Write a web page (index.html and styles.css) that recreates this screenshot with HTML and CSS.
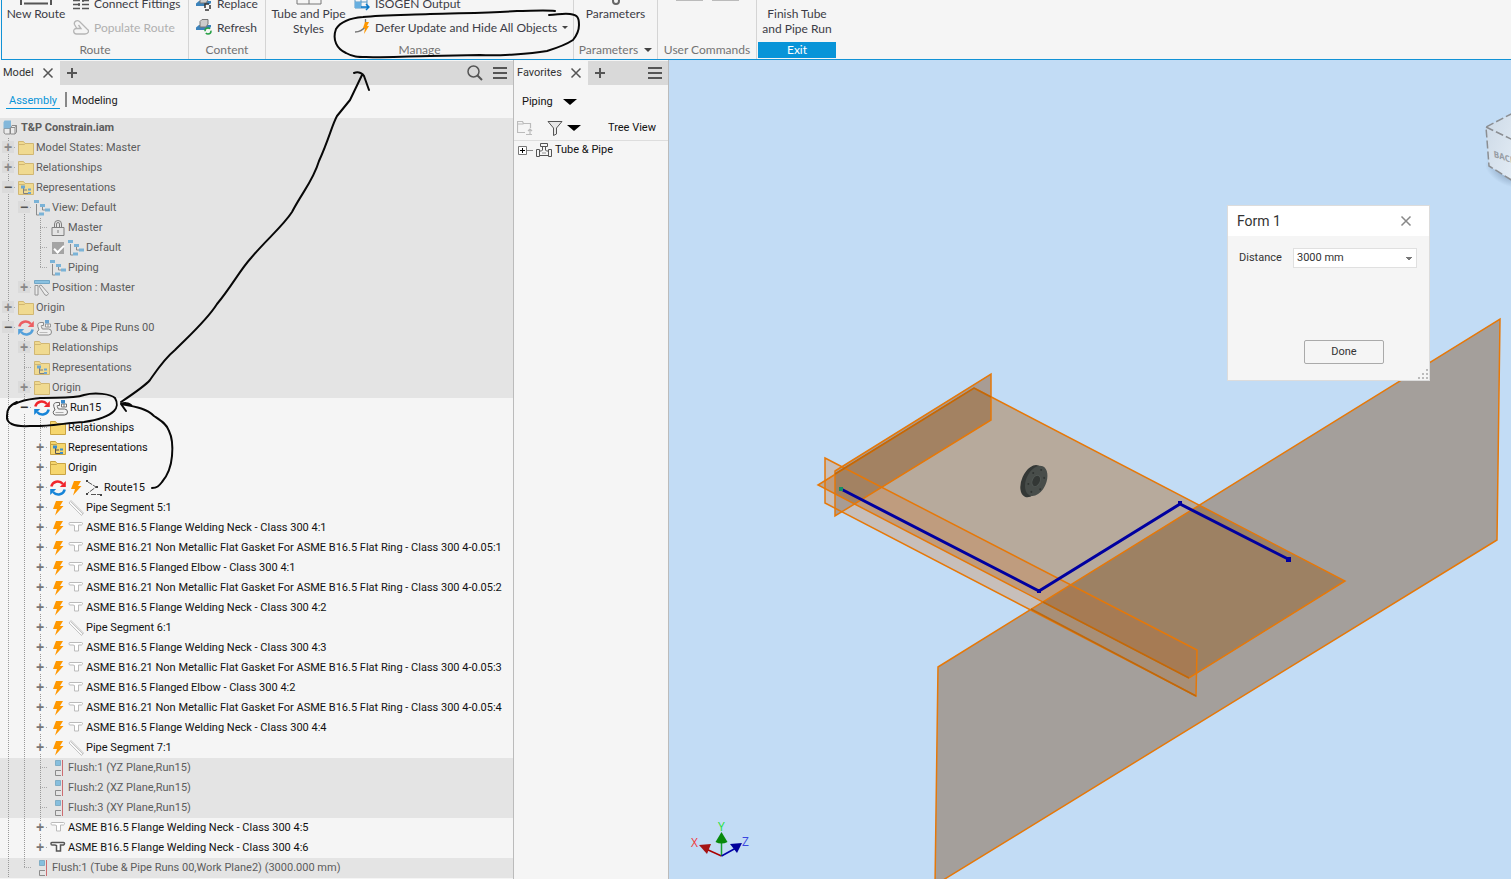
FILE: index.html
```html
<!DOCTYPE html>
<html lang="en">
<head>
<meta charset="utf-8">
<title>T&amp;P Constrain.iam</title>
<link rel="stylesheet" href="styles.css">
</head>
<body>
<svg class="defs" aria-hidden="true">
  <symbol id="folder" viewBox="0 0 16 16"><path d="M.5 14.500V1.500h5l1.500 2h8.500v11z" fill="#f6d66d" stroke="#c9a444"/><path d="M1 4.500h5.500l1-1" fill="none" stroke="#c9a444"/></symbol>
  <symbol id="repfolder" viewBox="0 0 16 16"><use href="#folder"/><path d="M5.500 8v5.500H10M5.500 10H9" fill="none" stroke="#555"/><path d="M3 5.500h4v3H3zM10 8.500h3v2h-3zM10 12h3v2h-3z" fill="#3d8cc9"/></symbol>
  <symbol id="view" viewBox="0 0 16 16"><path d="M2.500 4v11H5M8.500 7v3H12" fill="none" stroke="#666"/><path d="M0 0h5v3H0zM6 4h5v3H6zM11 8.500h5v3h-5zM5 12.500h5v3H5z" fill="#4f9fd2"/></symbol>
  <symbol id="lock" viewBox="0 0 16 16"><path d="M2 7.500h12v8H2zM4.500 7V4a3.500 3.500 0 0 1 7 0v3M6.500 7V4a1.500 1.500 0 0 1 3 0v3M8 10v3" fill="none" stroke="#555"/></symbol>
  <symbol id="position" viewBox="0 0 16 16"><path d="M.5.500h15v3H.5z" fill="#65b3df" stroke="#438ebb"/><path d="M1 15V5.500h3V15zM5 6l2-1 7.500 8.500-1.500 2-2-.5z" fill="#eee" stroke="#777"/></symbol>
  <symbol id="sync" viewBox="0 0 16 16"><path d="M1.300 6.500C2.500 1.500 9-.5 13 4" fill="none" stroke="#f0262c" stroke-width="2.500"/><path d="M15.800 1v6h-6z" fill="#f0262c"/><path d="M14.700 9.500c-1.200 5-7.700 7-11.700 2.500" fill="none" stroke="#1684d8" stroke-width="2.500"/><path d="M.2 15V9h6z" fill="#1684d8"/></symbol>
  <symbol id="run" viewBox="0 0 16 16"><path d="M3 10L1.800 6.500C1 3.500 3 2.500 5 2.500h2.500v3H5.800q-1 0-.5 1l1 2.500h6.200a3 3 0 0 1 0 6H3.200a2.600 2.600 0 0 1-.2-5z" fill="#f4f4f4" stroke="#666"/><path d="M3.500 12.500h8" stroke="#aaa"/><path d="M9.500 4v3h5V4zM12 4v3" fill="#fff" stroke="#777"/><path d="M9 0h4v3.500H9z" fill="#3889ca"/></symbol>
  <symbol id="bolt" viewBox="0 0 16 16"><path d="M6 1h7l-3 5h3.500L5 15.500 7 9H3z" fill="#ff9800"/></symbol>
  <symbol id="route" viewBox="0 0 16 16"><path d="M2 2l8 5-8 6M5 14.500h10" fill="none" stroke="#555" stroke-dasharray="5 1"/><path d="M0 0h2v2H0zM10 6h2v2h-2zM0 13h2v2H0zM14 14h2v2h-2z" fill="#444"/></symbol>
  <symbol id="pipe" viewBox="0 0 16 16"><path d="M1 3l2-2.500L15.500 13l-2 2.500zM3 2l12 12" fill="#fafafa" stroke="#c4c4c4"/></symbol>
  <symbol id="flange" viewBox="0 0 16 16"><path d="M2 2.500h11.500q1 0 1 1t-1 1.500H10.500v6h-4V5.500L5 5H2q-1 0-1-1.300t1-1.200z" fill="#fff" stroke="#bbb"/></symbol>
  <symbol id="flangedark" viewBox="0 0 16 16"><path d="M2 2.500h11.500q1 0 1 1t-1 1.500H10.500v6h-4V5.500L5 5H2q-1 0-1-1.300t1-1.200z" fill="#fff" stroke="#555" stroke-width="1.500"/></symbol>
  <symbol id="flush" viewBox="0 0 16 16"><path d="M5.500.500h5v5h-5z" fill="#5fafdb" stroke="#5696b8"/><path d="M11 10.500H5.500v5H11" fill="none" stroke="#666"/><path d="M12.500 0v16" stroke="#c43a40"/></symbol>
  <symbol id="assembly" viewBox="0 0 16 16"><path d="M1 8.500h6v5.500H2.500L1 13zM7.500 7.500L9 5.500h4.500V12L12 14H7.500zM7.500 7.500H12V14M12 7.500l1.500-2" fill="#eee" stroke="#666"/><path d="M.5 2.500l1-2h6.500v6L6.500 8.500h-6z" fill="#5aa5d6"/></symbol>
  <symbol id="close" viewBox="0 0 12 12"><path d="M1.500 1.500l9 9m0-9l-9 9" fill="none" stroke="currentColor" stroke-width="1.500"/></symbol>
  <symbol id="plus" viewBox="0 0 12 12"><path d="M6 1v10M1 6h10" stroke="currentColor" stroke-width="2"/></symbol>
  <symbol id="menu" viewBox="0 0 14 12"><path d="M0 1h14M0 6h14M0 11h14" stroke="currentColor" stroke-width="2"/></symbol>
  <symbol id="replace" viewBox="0 0 16 16"><path d="M0 8.500L3 6h12v2l-3 3H0z" fill="#3b83bc"/><path d="M4 7V2.500L6 .500h6V5l-2 3H4z" fill="#ccc" stroke="#777"/></symbol>
</svg>

<header class="ribbon">
  <section class="group route">
    <div class="tools">
      <button class="big"><svg class="bigicon" viewBox="0 0 32 32"><path d="M1 26v5M31 26v5M4 29.500h24" stroke="#555" stroke-width="2"/></svg><span>New Route</span></button>
      <div class="stack">
        <button><svg class="ic" viewBox="0 0 16 16"><path d="M0 5.500h7M0 9.500h7M0 13.500h7M9 5.500h7M9 9.500h7M9 13.500h7M6 8v3M10 4v3" stroke="#555" stroke-width="1.500"/></svg>Connect Fittings</button>
        <button disabled><svg class="ic" viewBox="0 0 16 16"><path d="M3.500 9L1.500 5.500C.5 2.500 4 .500 6.500 2.500L14 10c3 2 1 5-2 5H3.500C0 15-.5 9.500 3.500 9.500H8L5.500 6" fill="none" stroke="#b5b5b5" stroke-width="1.300"/></svg>Populate Route</button>
      </div>
    </div>
    <h2>Route</h2>
  </section>
  <section class="group content">
    <div class="tools"><div class="stack">
      <button><svg class="ic" viewBox="0 0 16 16"><use href="#replace"/><path d="M9 9h5v6H9z" fill="#f5f5f5" stroke="#333" stroke-width="1.500" stroke-dasharray="4 2"/></svg>Replace</button>
      <button><svg class="ic" viewBox="0 0 16 16"><use href="#replace"/><circle cx="12" cy="12" r="3" fill="#f5f5f5" stroke="#27a045" stroke-width="1.500" stroke-dasharray="7 2"/></svg>Refresh</button>
    </div></div>
    <h2>Content</h2>
  </section>
  <section class="group manage">
    <div class="tools">
      <button class="big"><svg class="bigicon" viewBox="0 0 32 32"><path d="M4 22v8h24v-8M16 25v5" fill="none" stroke="#777"/></svg><span>Tube and Pipe<br>Styles</span></button>
      <div class="stack">
        <button><svg class="ic" viewBox="0 0 16 16"><path d="M1 1h12v12H1zM7 1v12M1 7h12" fill="#f5f5f5" stroke="#5597c6"/><path d="M1 7h6v6H1z" fill="#67afe0"/><path d="M7 12h7M12 9l3 3-3 3" fill="none" stroke="#0878c9" stroke-width="1.500"/></svg>ISOGEN Output</button>
        <button><svg class="ic" viewBox="0 0 16 16"><path d="M1 13c5 0 8-2 11-6M11.500 0v4" fill="none" stroke="#777" stroke-width="1.300"/><path d="M11 3h4l-2 4h2l-5 8 1-6H9z" fill="#ff9800"/></svg>Defer Update and Hide All Objects<i class="caret small"></i></button>
      </div>
    </div>
    <h2>Manage</h2>
  </section>
  <section class="group params">
    <div class="tools"><button class="big"><svg class="bigicon" viewBox="0 0 32 32"><circle cx="16" cy="27" r="3" fill="none" stroke="#666" stroke-width="2"/></svg><span>Parameters</span></button></div>
    <h2>Parameters <i class="caret"></i></h2>
  </section>
  <section class="group user">
    <div class="tools ghosts"><i></i><i></i></div>
    <h2>User Commands</h2>
  </section>
  <section class="group exit">
    <div class="tools"><button class="big"><span>Finish Tube<br>and Pipe Run</span></button></div>
    <h2>Exit</h2>
  </section>
</header>

<main class="work">
  <aside class="panel model">
    <div class="tabs">
      <button class="tab">Model <svg class="x"><use href="#close"/></svg></button>
      <button class="add" aria-label="Add panel"><svg class="x"><use href="#plus"/></svg></button>
      <span class="grow"></span>
      <button class="tool" aria-label="Search"><svg class="search" viewBox="0 0 16 16"><circle cx="6.500" cy="6.500" r="5.500" fill="none" stroke="currentColor" stroke-width="1.500"/><path d="M10.500 10.500l4.500 4.500" stroke="currentColor" stroke-width="2"/></svg></button>
      <button class="tool" aria-label="Menu"><svg class="menu"><use href="#menu"/></svg></button>
    </div>
    <nav class="modes"><a class="on" href="#assembly-view">Assembly</a><a href="#modeling-view">Modeling</a></nav>
    <ul class="tree">
      <li class="dim root"><svg><use href="#assembly"/></svg><b>T&amp;P Constrain.iam</b></li>
      <li class="dim"><i class="n"><button>+</button></i><svg><use href="#folder"/></svg>Model States: Master</li>
      <li class="dim"><i class="n"><button>+</button></i><svg><use href="#folder"/></svg>Relationships</li>
      <li class="dim"><i class="n"><button class="open">−</button></i><svg><use href="#repfolder"/></svg>Representations</li>
      <li class="dim"><i class="g"></i><i class="n"><button class="open">−</button></i><svg><use href="#view"/></svg>View: Default</li>
      <li class="dim"><i class="g"></i><i class="g"></i><i class="n"></i><svg><use href="#lock"/></svg>Master</li>
      <li class="dim"><i class="g"></i><i class="g"></i><i class="n"></i><input type="checkbox" checked id="def"><svg><use href="#view"/></svg><label for="def">Default</label></li>
      <li class="dim"><i class="g"></i><i class="g"></i><i class="n end"></i><svg><use href="#view"/></svg>Piping</li>
      <li class="dim"><i class="g"></i><i class="n end"><button>+</button></i><svg><use href="#position"/></svg>Position : Master</li>
      <li class="dim"><i class="n"><button>+</button></i><svg><use href="#folder"/></svg>Origin</li>
      <li class="dim"><i class="n"><button class="open">−</button></i><svg><use href="#sync"/></svg><svg><use href="#run"/></svg>Tube &amp; Pipe Runs 00</li>
      <li class="dim"><i class="g"></i><i class="n"><button>+</button></i><svg><use href="#folder"/></svg>Relationships</li>
      <li class="dim"><i class="g"></i><i class="n"></i><svg><use href="#repfolder"/></svg>Representations</li>
      <li class="dim"><i class="g"></i><i class="n"><button>+</button></i><svg><use href="#folder"/></svg>Origin</li>
      <li><i class="g"></i><i class="n"><button class="open">−</button></i><svg><use href="#sync"/></svg><svg><use href="#run"/></svg>Run15</li>
      <li><i class="g"></i><i class="g"></i><i class="n"></i><svg><use href="#folder"/></svg>Relationships</li>
      <li><i class="g"></i><i class="g"></i><i class="n"><button>+</button></i><svg><use href="#repfolder"/></svg>Representations</li>
      <li><i class="g"></i><i class="g"></i><i class="n"><button>+</button></i><svg><use href="#folder"/></svg>Origin</li>
      <li><i class="g"></i><i class="g"></i><i class="n"><button>+</button></i><svg><use href="#sync"/></svg><svg><use href="#bolt"/></svg><svg><use href="#route"/></svg>Route15</li>
      <li><i class="g"></i><i class="g"></i><i class="n"><button>+</button></i><svg><use href="#bolt"/></svg><svg><use href="#pipe"/></svg>Pipe Segment 5:1</li>
      <li><i class="g"></i><i class="g"></i><i class="n"><button>+</button></i><svg><use href="#bolt"/></svg><svg><use href="#flange"/></svg>ASME B16.5 Flange Welding Neck - Class 300 4:1</li>
      <li><i class="g"></i><i class="g"></i><i class="n"><button>+</button></i><svg><use href="#bolt"/></svg><svg><use href="#flange"/></svg>ASME B16.21 Non Metallic Flat Gasket For ASME B16.5 Flat Ring - Class 300 4-0.05:1</li>
      <li><i class="g"></i><i class="g"></i><i class="n"><button>+</button></i><svg><use href="#bolt"/></svg><svg><use href="#flange"/></svg>ASME B16.5 Flanged Elbow - Class 300 4:1</li>
      <li><i class="g"></i><i class="g"></i><i class="n"><button>+</button></i><svg><use href="#bolt"/></svg><svg><use href="#flange"/></svg>ASME B16.21 Non Metallic Flat Gasket For ASME B16.5 Flat Ring - Class 300 4-0.05:2</li>
      <li><i class="g"></i><i class="g"></i><i class="n"><button>+</button></i><svg><use href="#bolt"/></svg><svg><use href="#flange"/></svg>ASME B16.5 Flange Welding Neck - Class 300 4:2</li>
      <li><i class="g"></i><i class="g"></i><i class="n"><button>+</button></i><svg><use href="#bolt"/></svg><svg><use href="#pipe"/></svg>Pipe Segment 6:1</li>
      <li><i class="g"></i><i class="g"></i><i class="n"><button>+</button></i><svg><use href="#bolt"/></svg><svg><use href="#flange"/></svg>ASME B16.5 Flange Welding Neck - Class 300 4:3</li>
      <li><i class="g"></i><i class="g"></i><i class="n"><button>+</button></i><svg><use href="#bolt"/></svg><svg><use href="#flange"/></svg>ASME B16.21 Non Metallic Flat Gasket For ASME B16.5 Flat Ring - Class 300 4-0.05:3</li>
      <li><i class="g"></i><i class="g"></i><i class="n"><button>+</button></i><svg><use href="#bolt"/></svg><svg><use href="#flange"/></svg>ASME B16.5 Flanged Elbow - Class 300 4:2</li>
      <li><i class="g"></i><i class="g"></i><i class="n"><button>+</button></i><svg><use href="#bolt"/></svg><svg><use href="#flange"/></svg>ASME B16.21 Non Metallic Flat Gasket For ASME B16.5 Flat Ring - Class 300 4-0.05:4</li>
      <li><i class="g"></i><i class="g"></i><i class="n"><button>+</button></i><svg><use href="#bolt"/></svg><svg><use href="#flange"/></svg>ASME B16.5 Flange Welding Neck - Class 300 4:4</li>
      <li><i class="g"></i><i class="g"></i><i class="n"><button>+</button></i><svg><use href="#bolt"/></svg><svg><use href="#pipe"/></svg>Pipe Segment 7:1</li>
      <li class="dim"><i class="g"></i><i class="g"></i><i class="n"></i><svg><use href="#flush"/></svg>Flush:1 (YZ Plane,Run15)</li>
      <li class="dim"><i class="g"></i><i class="g"></i><i class="n"></i><svg><use href="#flush"/></svg>Flush:2 (XZ Plane,Run15)</li>
      <li class="dim"><i class="g"></i><i class="g"></i><i class="n"></i><svg><use href="#flush"/></svg>Flush:3 (XY Plane,Run15)</li>
      <li><i class="g"></i><i class="g"></i><i class="n"><button>+</button></i><svg><use href="#flange"/></svg>ASME B16.5 Flange Welding Neck - Class 300 4:5</li>
      <li><i class="g"></i><i class="g"></i><i class="n end"><button>+</button></i><svg><use href="#flangedark"/></svg>ASME B16.5 Flange Welding Neck - Class 300 4:6</li>
      <li class="dim"><i class="g"></i><i class="n end"></i><svg><use href="#flush"/></svg>Flush:1 (Tube &amp; Pipe Runs 00,Work Plane2) (3000.000 mm)</li>
    </ul>
  </aside>

  <aside class="panel favorites">
    <div class="tabs">
      <button class="tab">Favorites <svg class="x"><use href="#close"/></svg></button>
      <button class="add" aria-label="Add panel"><svg class="x"><use href="#plus"/></svg></button>
      <span class="grow"></span>
      <button class="tool" aria-label="Menu"><svg class="menu"><use href="#menu"/></svg></button>
    </div>
    <button class="library">Piping <i class="caret large"></i></button>
    <div class="filters">
      <button aria-label="New folder"><svg viewBox="0 0 16 16"><path d="M8 12.500H.500V1.500h5l1 2h7V8M.5 4h6M9 14.500h6M13 14V9M11 11l2-2 2 2" fill="none" stroke="#bbb" stroke-width="1.200"/></svg></button>
      <button class="filter" aria-label="Filter"><svg viewBox="0 0 16 16"><path d="M1 1.500h14L9.500 8v6l-3 1.500V8z" fill="#e8e8e8" stroke="#555"/></svg><i class="caret large"></i></button>
      <button class="treeview">Tree View <i class="caret large"></i></button>
    </div>
    <div class="favitem"><button aria-label="Expand"><svg viewBox="0 0 9 9"><path d="M.5.500h8v8h-8z" fill="#fff" stroke="#777"/><path d="M2 4.500h5M4.500 2v5" stroke="#000"/></svg></button><i></i><svg viewBox="0 0 16 16"><path d="M.5 7.500h3v7h-3zM12.500 7.500h3v7h-3zM3.500 9h2l1-1V4.500h3V8l1 1h2M3.500 13.500h9M4.500 1.500h7v3h-7z" fill="#f5f5f5" stroke="#555"/><path d="M6 11h4" stroke="#999"/></svg>Tube &amp; Pipe</div>
  </aside>

  <section class="viewport">
    <svg class="scene" viewBox="669 60 842 819" preserveAspectRatio="xMinYMin slice" role="img" aria-label="Pipe route model">
      <defs>
        <clipPath id="cm"><path d="M818 485L974 388 1345 581 1189 678z"/></clipPath>
        <clipPath id="cb"><path d="M938 667L1500 319 1497 540 935 885z"/></clipPath>
        <radialGradient id="sh"><stop stop-color="#6f88a5" stop-opacity=".7"/><stop offset="1" stop-color="#6f88a5" stop-opacity="0"/></radialGradient>
        <linearGradient id="cube" x2="1" y2="1"><stop stop-color="#ccd9e6"/><stop offset="1" stop-color="#e3ecf5"/></linearGradient>
        <path id="big" d="M938 667L1500 319 1497 540 935 885z"/>
        <path id="thin" d="M825 458L1197 650 1196 696 825 503z"/>
        <path id="back" d="M991 374V420L835 516V471z"/>
      </defs>
      <path d="M818 485L974 388 1345 581 1189 678z" fill="#b7aa9c"/>
      <use href="#big" fill="#a49f9b"/>
      <use href="#thin" fill="#c7bfbb"/>
      <g clip-path="url(#cm)"><use href="#big" fill="#9d8163"/><use href="#thin" fill="#bf9c7e"/></g>
      <g clip-path="url(#cb)"><use href="#thin" fill="#a88f77"/><g clip-path="url(#cm)"><use href="#thin" fill="#a67b54"/></g></g>
      <use href="#back" fill="#a89c94"/>
      <g clip-path="url(#cm)"><use href="#back" fill="#a38262"/></g>
      <g fill="none" stroke="#e67808" stroke-width="1.500">
        <path d="M974 388L1345 581 1189 678 818 485z"/>
        <use href="#big"/><use href="#thin"/><use href="#back"/>
      </g>
      <path d="M835 474L974 388 991 397M1043 602L1189 678M1031 609L1196 696" fill="none" stroke="#bf680c" stroke-width="1.500"/>
      <g transform="rotate(24 1034 481)"><ellipse cx="1032" cy="482" rx="10" ry="17" fill="#343836"/><ellipse cx="1036" cy="480" rx="10" ry="16" fill="#484d4a"/><ellipse cx="1036" cy="480" rx="4" ry="6" fill="#333735" stroke="#505653"/><g fill="#303432"><circle cx="1036" cy="468" r="1"/><circle cx="1042" cy="474" r="1"/><circle cx="1043" cy="486" r="1"/><circle cx="1036" cy="492" r="1"/><circle cx="1030" cy="486" r="1"/><circle cx="1030" cy="474" r="1"/></g></g>
      <path d="M841 489L1039 591 1180 504 1288 559" fill="none" stroke="#0000a0" stroke-width="3"/>
      <path d="M1037 589h4v4h-4zM1178 501h4v4h-4zM1286 557h5v5h-5z" fill="#0000a0"/><path d="M839 487h4v4h-4z" fill="#159064"/>

      <ellipse cx="1507" cy="172" rx="24" ry="13" fill="url(#sh)" transform="rotate(28 1507 172)"/>
      <path d="M1486 127l27-14v68l-24-15z" fill="url(#cube)"/>
      <path d="M1513 113l-27 14 3 39 24 15M1486 127l27 13" fill="none" stroke="#8b8e92" stroke-width="1.500" stroke-dasharray="8 3"/>
      <text class="cubelabel" transform="matrix(.9 .3 .1 1 1494 157)">BACK</text>

      <g stroke-width="1.500"><path d="M721.500 856L706 849" stroke="#a00"/><path d="M721.500 856V841" stroke="#16a030"/><path d="M721.500 856L736 848" stroke="#00a"/></g>
      <path d="M699 845l12-1-4 10z" fill="#a51414"/><path d="M721.500 832l6 10q-6 3-12 0z" fill="#078a0c"/><path d="M742 843l-12 1 7 9z" fill="#00009c"/>
      <g class="axes"><text x="691" y="847" fill="#f03a3a">X</text><text x="718" y="831" fill="#25e035">Y</text><text x="742" y="846" fill="#3a46e0">Z</text></g>
    </svg>
    <form class="dialog">
      <header><h1>Form 1</h1><button type="button" aria-label="Close"><svg class="x"><use href="#close"/></svg></button></header>
      <div class="field"><label for="distance">Distance</label><select id="distance"><option>3000 mm</option></select></div>
      <button type="button" class="done">Done</button>
      <svg class="grip" viewBox="0 0 12 12"><path d="M8 0h2v2H8zM4 4h2v2H4zM8 4h2v2H8zM0 8h2v2H0zM4 8h2v2H4zM8 8h2v2H8z" fill="#bbb"/></svg>
    </form>
  </section>
</main>

<svg class="ink" width="620" height="500" viewBox="0 0 620 500" aria-hidden="true">
  <path d="M555 11C545 10 530 11 517 11 490 13 460 13 430 14 400 15 380 15 363 17 350 18 341 21 336 29 332 40 337 49 346 53 353 57 358 57 366 57 395 58 410 56 430 56L480 55C500 56 530 54 547 51 560 47 567 44 573 40 577 35 579 31 579 25 579 18 578 15 570 14 562 13 557 15 549 15"/>
  <path d="M121 402C133 394 145 386 150 380 157 370 164 359 175 350 190 335 207 320 217 304 232 286 240 270 251 258 267 239 283 226 292 212 303 191 313 181 319 161 329 139 332 125 337 116L350 100 362 75M354 73C359 71 363 74 364 76L369 90"/>
  <path d="M15 404C24 399 32 399 40 398 55 397 73 399 84 395 95 392 111 394 115 398 118 403 117 408 114 411 108 417 98 420 84 422 64 423 48 427 30 426 13 427 6 423 7 416 7 409 9 406 17 402"/>
  <path d="M152 488C157 488 159 486 162 482 168 475 171 468 172 456 173 445 172 437 169 431 167 424 160 420 154 416 147 409 138 407 121 404M132 406C129 402 123 403 121 404L126 411"/>
</svg>
</body>
</html>
```
FILE: styles.css
```css
* { box-sizing: border-box; }
body { margin: 0; height: 100vh; display: flex; flex-direction: column; overflow: hidden; position: relative; background: #f5f5f5; color: #111; font: 11px/20px Roboto, sans-serif; }
button, select, input { font: inherit; color: inherit; margin: 0; }
button { border: 0; padding: 0; background: none; }
h1, h2, ul { margin: 0; padding: 0; font-weight: normal; }
ul { list-style: none; }
.defs { position: absolute; width: 0; height: 0; }
.caret { display: inline-block; border: 4px solid transparent; border-top-color: #444; border-bottom: 0; }
.caret.small { border-width: 3px 3px 0; margin-left: 5px; }
.caret.large { border-width: 6px 7px 0; border-top-color: #000; }

.ribbon { display: flex; flex: none; height: 60px; overflow: hidden; border-left: 1px solid #1192d6; border-bottom: 1px solid #1192d6; margin-left: 1px; color: #3c3c46; font: 12px/15px Lato, sans-serif; }
.group { display: flex; flex-direction: column; justify-content: flex-end; border-right: 1px solid #d4d4d4; white-space: nowrap; }
.group h2 { text-align: center; font-size: 12px; line-height: 16px; color: #737373; margin-bottom: 1px; }
.tools { display: flex; align-items: flex-end; }
.stack { display: flex; flex-direction: column; margin-bottom: 3px; }
.stack button { display: flex; align-items: center; height: 24px; }
.stack button:disabled { color: #b0b0b0; }
.ic { width: 16px; height: 16px; margin-right: 5px; }
.big { display: flex; flex-direction: column; align-items: center; flex: none; width: 100%; }
.big span { height: 36px; }
.bigicon { width: 32px; height: 32px; }
.route { width: 187px; }
.route .big { width: 68px; margin-right: 3px; }
.content { width: 77px; padding-left: 7px; }
.content h2 { margin-left: -7px; }
.manage { width: 308px; }
.manage .big { width: 85px; margin-right: 3px; }
.params { width: 84px; }
.params .caret { margin: 0 0 2px 3px; }
.user { width: 99px; }
.ghosts { height: 54px; gap: 9px; justify-content: center; align-items: flex-start; }
.ghosts i { width: 27px; height: 12px; margin-top: -11px; border: 1px solid #bbb; }
.exit { width: 79px; padding-left: 1px; border: 0; }
.exit h2 { background: #0894d8; color: #fff; }

.work { display: flex; flex: 1; min-height: 0; }
.panel { display: flex; flex-direction: column; flex: none; border-right: 1px solid #bbb; }
.model { width: 514px; }
.favorites { width: 155px; }
.tabs { display: flex; flex: none; height: 24px; margin-top: 1px; background: #d9d9d9; color: #333; }
.tab { display: flex; align-items: center; gap: 8px; padding: 0 6px 0 3px; background: #f5f5f5; }
.x { width: 12px; height: 12px; color: #555; }
.add { display: flex; align-items: center; padding: 0 6px; }
.grow { flex: 1; }
.tool { display: flex; align-items: center; padding: 0 6px 0 4px; color: #555; }
.search { width: 16px; height: 16px; }
.menu { width: 14px; height: 12px; }
.modes { display: flex; flex: none; height: 33px; padding: 7px 6px; }
.modes a { color: #222; text-decoration: none; line-height: 17px; padding: 0 3px; }
.modes .on { color: #0894d8; border-bottom: 1px solid #0894d8; height: 17px; }
.modes .on + a { margin-left: 5px; padding-left: 5px; border-left: 2px solid #888; height: 15px; }
.tree { flex: 1; min-height: 0; overflow: hidden; }
.tree li { display: flex; align-items: center; height: 20px; white-space: nowrap; }
.tree li.dim { background: #e4e4e4; color: #5c5c5c; }
.tree svg { width: 16px; height: 16px; margin: 0 2px 1px 0; flex: none; }
.dim svg { opacity: .7; }
.root { padding-left: 3px; }
.g, .n { flex: none; width: 16px; height: 20px; background: repeating-linear-gradient(#999 0 1px, transparent 1px 2px) 8px 0 / 1px 20px no-repeat; }
.n { display: flex; align-items: center; justify-content: center; width: 18px; padding: 0 2px 2px 0; background: repeating-linear-gradient(#999 0 1px, transparent 1px 2px) 8px 0 / 1px 20px no-repeat, repeating-linear-gradient(90deg, #aaa 0 1px, transparent 1px 2px) 8px 9px / 8px 1px no-repeat; }
.n.end { background-size: 1px 10px, 8px 1px; }
.n button { width: 12px; height: 12px; background: #f5f5f5; color: #777; font: bold 14px/10px "Liberation Sans", sans-serif; }
.n button.open { color: #333; }
.dim .n button { background: #dbdbdb; color: #888; }
.dim .n button.open { color: #555; }
.tree input { appearance: none; width: 12px; height: 12px; margin: 0 4px 0 2px; background: #a4a4a4; position: relative; }
.tree input::after { content: ""; position: absolute; left: 4px; top: 1px; width: 4px; height: 8px; border: solid #fff; border-width: 0 2px 2px 0; transform: rotate(45deg); }

.library { display: flex; flex: none; align-items: center; gap: 10px; height: 33px; padding-left: 8px; }
.filters { display: flex; flex: none; align-items: center; height: 23px; border-bottom: 1px solid #ddd; padding: 0 0 3px 3px; overflow: hidden; white-space: nowrap; }
.filters button { display: flex; flex: none; align-items: center; }
.filters svg { width: 16px; height: 16px; }
.filters .filter { margin: 0 27px 0 14px; gap: 4px; }
.treeview { gap: 12px; }
.favitem { display: flex; align-items: center; height: 18px; padding-left: 4px; }
.favitem i { width: 6px; border-top: 1px solid #888; margin-right: 3px; }
.favitem svg { width: 16px; height: 16px; margin-right: 3px; }
.favitem button svg { display: block; width: 9px; height: 9px; margin: 0; }

.viewport { position: relative; flex: 1; min-width: 0; background: #c2dcf5; overflow: hidden; }
.scene { display: block; width: 100%; height: 100%; }
.cubelabel { font: bold 9px "Open Sans", sans-serif; fill: #969ca3; }
.axes { font: 12px "Open Sans", sans-serif; }
.dialog { position: absolute; left: 558px; top: 145px; width: 203px; height: 176px; border: 1px solid #dcdcdc; background: #f5f5f5; color: #333; display: flex; flex-direction: column; }
.dialog header { display: flex; align-items: center; justify-content: space-between; height: 30px; padding: 0 17px 0 9px; background: #fff; }
.dialog h1 { font-size: 14px; }
.dialog header .x { display: block; color: #888; }
.field { display: flex; align-items: center; justify-content: space-between; margin: 12px 12px 0 11px; }
.field select { appearance: none; width: 124px; height: 20px; padding: 0 3px; border: 1px solid #e0e0e0; border-radius: 0; line-height: 18px; background: linear-gradient(to bottom left, #777 50%, transparent 50%) 115px 8px / 3px 3px no-repeat, linear-gradient(to bottom right, transparent 50%, #777 50%) 112px 8px / 3px 3px no-repeat, #fff; background: conic-gradient(from -45deg at 50% 100%, #777 90deg, transparent 90deg) 112px 8px / 6px 3px no-repeat, #fff; }
.done { width: 80px; height: 24px; margin: 72px 0 0 76px; border: 1px solid #aaa; border-radius: 2px; }
.grip { position: absolute; right: -1px; bottom: -1px; width: 12px; height: 12px; }

.ink { position: absolute; left: 0; top: 0; pointer-events: none; fill: none; stroke: #080808; stroke-width: 2; stroke-linecap: round; stroke-linejoin: round; }
```
